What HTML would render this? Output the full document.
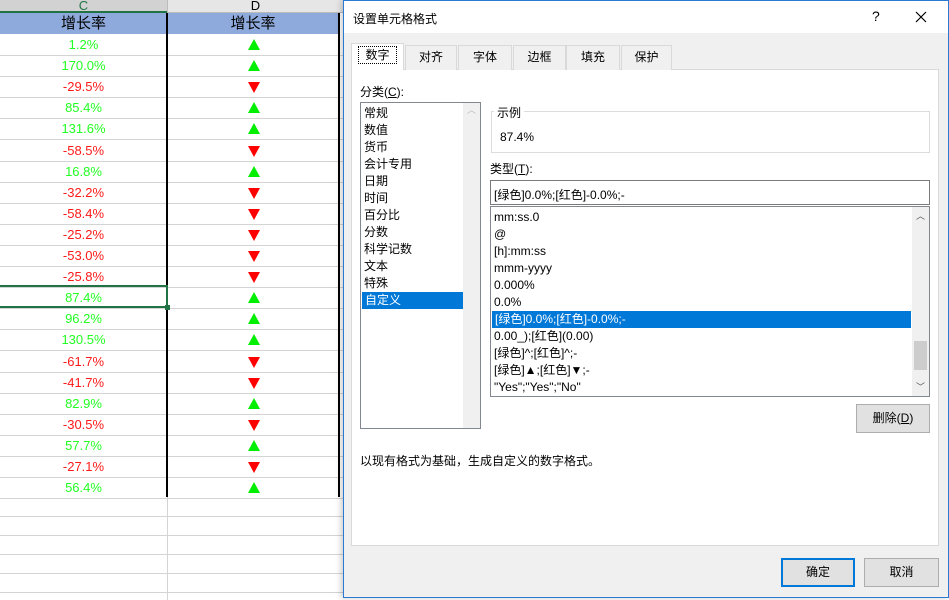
<!DOCTYPE html>
<html><head><meta charset="utf-8"><style>
*{margin:0;padding:0;box-sizing:border-box}
body{width:949px;height:600px;overflow:hidden;background:#fff;position:relative;font-family:"Liberation Sans","Microsoft YaHei","Noto Sans CJK SC",sans-serif;font-size:12px;color:#000}
.a{position:absolute}
.cell{position:absolute;height:21px;line-height:22px;text-align:center;font-size:13px}
.g{color:#22ff22}.r{color:#ff1a1a}
.hl{position:absolute;left:0;width:343px;height:1px;background:#d4d4d4}
.tab{position:absolute;top:44px;height:25px;border:1px solid #d9d9d9;border-bottom:none;background:#f0f0f0;text-align:center;line-height:23px;font-size:12px}
.li{height:17px;line-height:17px;padding-left:3px;font-size:12px}
.btn{position:absolute;background:#e1e1e1;border:1px solid #adadad;text-align:center;font-size:12px}
</style></head><body>
<div class="a" style="left:0;top:0;width:167px;height:13px;background:#d2d2d2;border-bottom:2px solid #217346;text-align:center;line-height:12px;font-size:13px;color:#217346">C</div>
<div class="a" style="left:167px;top:0;width:176px;height:13px;background:#e6e6e6;border-bottom:1px solid #bbb;text-align:center;line-height:12px;font-size:13px;border-left:1px solid #bbb">D</div>
<div class="a" style="left:0;top:13px;width:338px;height:21px;background:#8ea9db"></div>
<div class="cell" style="left:0;top:13px;width:167px;font-size:15px;line-height:21px">增长率</div>
<div class="cell" style="left:168px;top:13px;width:170px;font-size:15px;line-height:21px">增长率</div>
<div id="rows"></div>
<div class="a" style="left:167px;top:497px;width:1px;height:103px;background:#d4d4d4"></div>
<div class="a" style="left:166px;top:13px;width:2px;height:484px;background:#000"></div>
<div class="a" style="left:338px;top:13px;width:2px;height:484px;background:#000"></div>
<div class="a" style="left:0;top:285px;width:168px;height:23px;border:2px solid #217346;border-left:none"></div>
<div class="a" style="left:165px;top:305px;width:5px;height:5px;background:#217346"></div>
<script>
var v=["1.2","170.0","-29.5","85.4","131.6","-58.5","16.8","-32.2","-58.4","-25.2","-53.0","-25.8","87.4","96.2","130.5","-61.7","-41.7","82.9","-30.5","57.7","-27.1","56.4"];
var h="";
for(var i=0;i<22;i++){var t=34+i*21.1;var neg=v[i][0]=="-";
h+='<div class="hl" style="top:'+(t+21)+'px"></div>';
h+='<div class="cell '+(neg?'r':'g')+'" style="left:0;top:'+t+'px;width:167px">'+v[i]+'%</div>';
var tri=neg?'<svg width="12" height="12"><polygon points="0,1 12,1 6,12" fill="#ff0000"/></svg>':'<svg width="12" height="12"><polygon points="6,0 12,11 0,11" fill="#00ee00"/></svg>';
h+='<div class="a" style="left:248px;top:'+(t+5)+'px;width:12px;height:12px">'+tri+'</div>';}
for(var j=1;j<6;j++)h+='<div class="hl" style="top:'+(497+j*19)+'px"></div>';
document.getElementById("rows").innerHTML=h;
</script>
<div class="a" style="left:343px;top:0;width:606px;height:598px;background:#f0f0f0;border:1px solid #2b79d0;box-shadow:-2px 0 6px rgba(0,0,0,.2)">
 <div class="a" style="left:0;top:0;width:604px;height:32px;background:#fff"></div>
 <div class="a" style="left:9px;top:9px;font-size:12px">设置单元格格式</div>
 <div class="a" style="left:528px;top:7px;font-size:14px">?</div>
 <svg class="a" style="left:571px;top:10px" width="12" height="12"><path d="M1 1L11 11M11 1L1 11" stroke="#000" stroke-width="1.2"/></svg>
 <div class="a" style="left:7px;top:68px;width:588px;height:477px;background:#fff;border:1px solid #d9d9d9"></div>
 <div class="tab" style="left:7px;top:42px;width:53px;height:27px;background:#fff;border-color:#d9d9d9"><span style="border:1px dotted #000;padding:1px 6px">数字</span></div>
 <div class="tab" style="left:61px;width:52px">对齐</div>
 <div class="tab" style="left:114px;width:54px">字体</div>
 <div class="tab" style="left:169px;width:53px">边框</div>
 <div class="tab" style="left:222px;width:54px">填充</div>
 <div class="tab" style="left:277px;width:51px">保护</div>
 <div class="a" style="left:16px;top:82px">分类(<u>C</u>):</div>
 <div class="a" style="left:16px;top:101px;width:121px;height:327px;border:1px solid #828790;background:#fff;padding-top:2px">
  <div class="a" style="right:0;top:0;width:17px;height:325px;background:#f0f0f0;color:#bbb;font-size:9px;text-align:center">︿</div>
  <div class="li">常规</div><div class="li">数值</div><div class="li">货币</div><div class="li">会计专用</div><div class="li">日期</div><div class="li">时间</div><div class="li">百分比</div><div class="li">分数</div><div class="li">科学记数</div><div class="li">文本</div><div class="li">特殊</div>
  <div class="li" style="background:#0078d7;color:#fff;width:102px;margin-left:1px">自定义</div>
 </div>
 <div class="a" style="left:147px;top:110px;width:439px;height:42px;border:1px solid #dcdcdc"></div>
 <div class="a" style="left:150px;top:103px;background:#fff;padding:0 3px;font-size:12px">示例</div>
 <div class="a" style="left:156px;top:129px;font-size:12px">87.4%</div>
 <div class="a" style="left:146px;top:159px">类型(<u>T</u>):</div>
 <div class="a" style="left:146px;top:179px;width:440px;height:25px;border:1px solid #7a7a7a;background:#fff;padding:5px 3px;font-size:12px">[绿色]0.0%;[红色]-0.0%;-</div>
 <div class="a" style="left:146px;top:205px;width:440px;height:191px;border:1px solid #828790;background:#fff;padding-top:2px;font-size:12px;line-height:17px">
  <div class="a" style="right:0;top:0;width:17px;height:189px;background:#f0f0f0"><div class="a" style="left:2px;top:134px;width:13px;height:29px;background:#cdcdcd"></div><div class="a" style="left:4px;top:1px;font-size:9px;color:#555">︿</div><div class="a" style="left:4px;top:172px;font-size:9px;color:#555">﹀</div></div>
  <div style="padding-left:3px">mm:ss.0</div><div style="padding-left:3px">@</div><div style="padding-left:3px">[h]:mm:ss</div><div style="padding-left:3px">mmm-yyyy</div><div style="padding-left:3px">0.000%</div><div style="padding-left:3px">0.0%</div>
  <div style="padding-left:3px;background:#0078d7;color:#fff;width:419px;margin-left:1px">[绿色]0.0%;[红色]-0.0%;-</div>
  <div style="padding-left:3px">0.00_);[红色](0.00)</div><div style="padding-left:3px">[绿色]^;[红色]^;-</div><div style="padding-left:3px">[绿色]▲;[红色]▼;-</div><div style="padding-left:3px">"Yes";"Yes";"No"</div>
 </div>
 <div class="btn" style="left:512px;top:403px;width:74px;height:29px;line-height:27px">删除(<u>D</u>)</div>
 <div class="a" style="left:16px;top:451px">以现有格式为基础，生成自定义的数字格式。</div>
 <div class="btn" style="left:437px;top:557px;width:74px;height:29px;line-height:25px;border:2px solid #0078d7">确定</div>
 <div class="btn" style="left:520px;top:557px;width:75px;height:29px;line-height:27px">取消</div>
</div>
</body></html>
